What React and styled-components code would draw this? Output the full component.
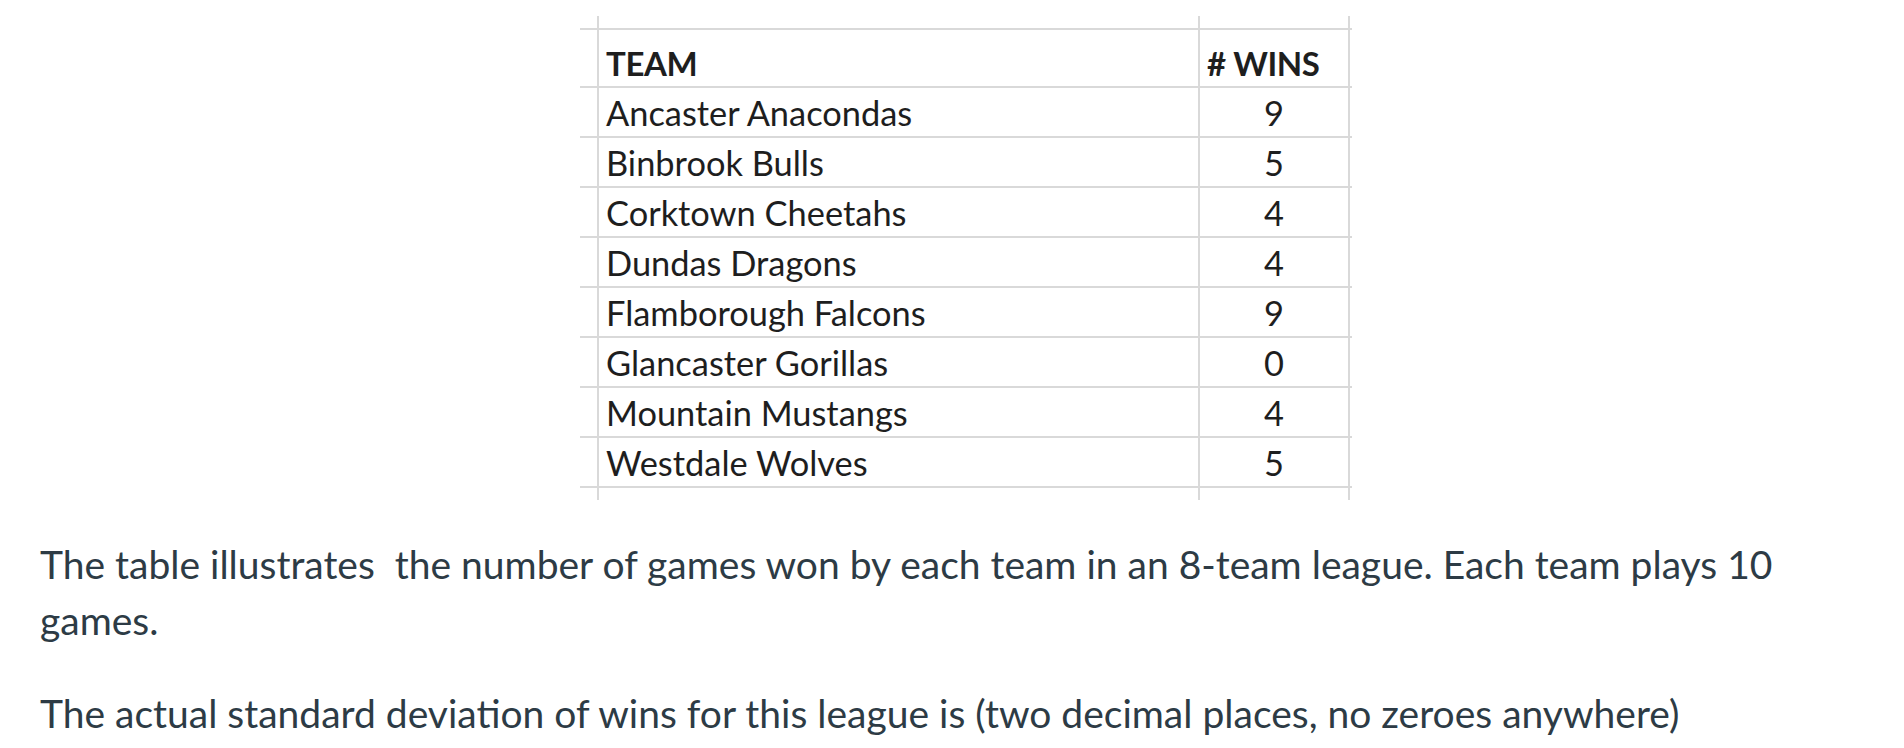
import React from "react";
import styled, { createGlobalStyle } from "styled-components";

const Global = createGlobalStyle`
  html, body { margin: 0; padding: 0; background: #ffffff; }
  body { font-family: Lato, "Liberation Sans", sans-serif; color: #2d3b45; }
`;

const Page = styled.div`
  padding: 16px 0 0 40px;
  width: 1800px;
`;

const Figure = styled.div`
  margin-left: 540px;
  display: grid;
  grid-template-columns: 17px 599px 148px 2px;
  grid-template-rows: 12px 56px repeat(8, 48px) 12px;
  gap: 2px;
  width: 772px;
  background: #d9d9d9;
  font-family: Lato, "Liberation Sans", sans-serif;
  color: #1e1e1e;
`;

const Cell = styled.div`
  background: #ffffff;
  display: flex;
  align-items: ${(p) => (p.$head ? "flex-end" : "center")};
  justify-content: ${(p) => (p.$num ? "center" : "flex-start")};
  padding: ${(p) => (p.$head ? "0 0 6px 7px" : p.$num ? "2px 0 0 0" : "2px 0 0 7px")};
  font-size: ${(p) => (p.$head ? "33px" : "34.4px")};
  font-weight: ${(p) => (p.$head ? 700 : 400)};
  letter-spacing: ${(p) => (p.$head ? "-0.4px" : "0")};
  white-space: nowrap;
  line-height: 1;
`;

const Text = styled.div`
  font-size: 39px;
  line-height: 56px;
  color: #2d3b45;
  padding-top: 36px;
`;

const Para = styled.p`
  margin: 0 0 37px 0;
`;

const rows = [
  ["Ancaster Anacondas", 9],
  ["Binbrook Bulls", 5],
  ["Corktown Cheetahs", 4],
  ["Dundas Dragons", 4],
  ["Flamborough Falcons", 9],
  ["Glancaster Gorillas", 0],
  ["Mountain Mustangs", 4],
  ["Westdale Wolves", 5],
];

export default function App() {
  return (
    <>
      <Global />
      <Page>
        <Figure>
          <Cell />
          <Cell />
          <Cell />
          <Cell />
          <Cell />
          <Cell $head>TEAM</Cell>
          <Cell $head>#&nbsp;WINS</Cell>
          <Cell />
          {rows.map(([team, wins]) => (
            <React.Fragment key={team}>
              <Cell />
              <Cell>{team}</Cell>
              <Cell $num>{wins}</Cell>
              <Cell />
            </React.Fragment>
          ))}
          <Cell />
          <Cell />
          <Cell />
          <Cell />
        </Figure>
        <Text>
          <Para>
            The table illustrates{"\u00a0"} the number of games won by each team in an 8-team league. Each team plays 10 games.
          </Para>
          <Para>
            The actual standard deviation of wins for this league is (two decimal places, no zeroes anywhere)
          </Para>
        </Text>
      </Page>
    </>
  );
}
